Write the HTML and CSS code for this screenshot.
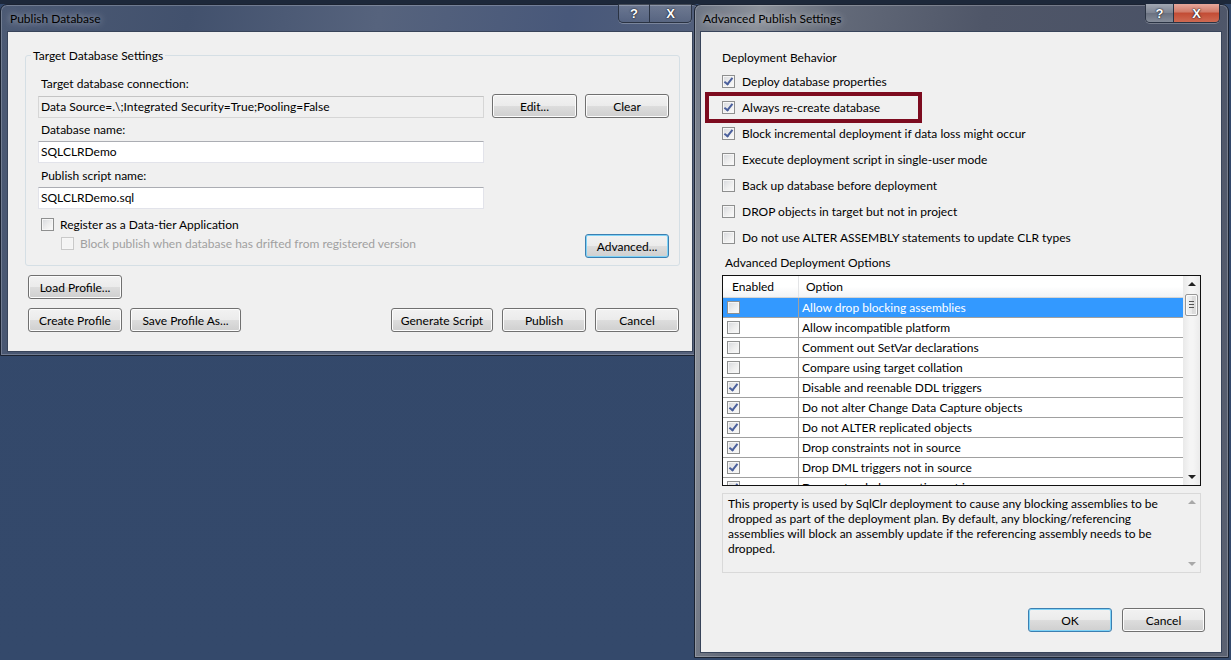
FILE: index.html
```html
<!DOCTYPE html>
<html>
<head>
<meta charset="utf-8">
<title>Publish Database</title>
<link rel="stylesheet" href="styles.css">
</head>
<body>
<div class="desktop">

  <section class="window win-publish">
    <header class="titlebar"><span class="title">Publish Database</span></header>
    <div class="caption-btns"><span class="cap help">?</span><span class="cap close">X</span></div>
    <div class="client pub-client">
      <div class="group">
        <span class="legend">Target Database Settings</span>
        <div class="lbl lbl-first">Target database connection:</div>
        <div class="conn-row">
          <div class="textbox readonly">Data Source=.\;Integrated Security=True;Pooling=False</div>
          <button class="btn w85">Edit...</button>
          <button class="btn w84">Clear</button>
        </div>
        <div class="lbl">Database name:</div>
        <div class="textbox">SQLCLRDemo</div>
        <div class="lbl lbl-gap">Publish script name:</div>
        <div class="textbox">SQLCLRDemo.sql</div>
        <label class="check-line reg"><span class="chk"></span>Register as a Data-tier Application</label>
        <div class="adv-row">
          <label class="check-line sub disabled"><span class="chk"></span>Block publish when database has drifted from registered version</label>
          <button class="btn default w84">Advanced...</button>
        </div>
      </div>
      <div class="load-line"><button class="btn w94">Load Profile...</button></div>
      <div class="action-line">
        <button class="btn w94">Create Profile</button>
        <button class="btn w111">Save Profile As...</button>
        <div class="spacer"></div>
        <button class="btn w102">Generate Script</button>
        <button class="btn w84">Publish</button>
        <button class="btn w84">Cancel</button>
      </div>
    </div>
  </section>

  <section class="window win-adv">
    <header class="titlebar"><span class="title">Advanced Publish Settings</span></header>
    <div class="caption-btns"><span class="cap help">?</span><span class="cap close">X</span></div>
    <div class="client adv-client">
      <div class="section-lbl">Deployment Behavior</div>
      <ul class="opt-list">
        <li class="opt"><span class="chk on"></span>Deploy database properties</li>
        <li class="opt"><span class="chk on"></span>Always re-create database<span class="mark"></span></li>
        <li class="opt"><span class="chk on"></span>Block incremental deployment if data loss might occur</li>
        <li class="opt"><span class="chk"></span>Execute deployment script in single-user mode</li>
        <li class="opt"><span class="chk"></span>Back up database before deployment</li>
        <li class="opt"><span class="chk"></span>DROP objects in target but not in project</li>
        <li class="opt"><span class="chk"></span>Do not use ALTER ASSEMBLY statements to update CLR types</li>
      </ul>
      <div class="section-lbl adv-lbl">Advanced Deployment Options</div>
      <div class="grid">
        <div class="grid-main">
          <div class="grid-head"><div class="gh c1">Enabled</div><div class="gh c2">Option</div></div>
          <div class="grid-row sel"><div class="gc c1"><span class="chk"></span></div><div class="gc c2">Allow drop blocking assemblies</div></div>
          <div class="grid-row"><div class="gc c1"><span class="chk"></span></div><div class="gc c2">Allow incompatible platform</div></div>
          <div class="grid-row"><div class="gc c1"><span class="chk"></span></div><div class="gc c2">Comment out SetVar declarations</div></div>
          <div class="grid-row"><div class="gc c1"><span class="chk"></span></div><div class="gc c2">Compare using target collation</div></div>
          <div class="grid-row"><div class="gc c1"><span class="chk on"></span></div><div class="gc c2">Disable and reenable DDL triggers</div></div>
          <div class="grid-row"><div class="gc c1"><span class="chk on"></span></div><div class="gc c2">Do not alter Change Data Capture objects</div></div>
          <div class="grid-row"><div class="gc c1"><span class="chk on"></span></div><div class="gc c2">Do not ALTER replicated objects</div></div>
          <div class="grid-row"><div class="gc c1"><span class="chk on"></span></div><div class="gc c2">Drop constraints not in source</div></div>
          <div class="grid-row"><div class="gc c1"><span class="chk on"></span></div><div class="gc c2">Drop DML triggers not in source</div></div>
          <div class="grid-row"><div class="gc c1"><span class="chk on"></span></div><div class="gc c2">Drop extended properties not in source</div></div>
        </div>
        <div class="vscroll">
          <span class="arr up"></span>
          <span class="thumb"></span>
          <span class="fill"></span>
          <span class="arr down"></span>
        </div>
      </div>
      <div class="desc">
        <p>This property is used by SqlClr deployment to cause any blocking assemblies to be<br>dropped as part of the deployment plan. By default, any blocking/referencing<br>assemblies will block an assembly update if the referencing assembly needs to be<br>dropped.</p>
        <div class="vscroll light">
          <span class="arr up"></span>
          <span class="fill"></span>
          <span class="arr down"></span>
        </div>
      </div>
      <div class="dlg-btns">
        <button class="btn default w84">OK</button>
        <button class="btn w83">Cancel</button>
      </div>
    </div>
  </section>

</div>
</body>
</html>
```

FILE: styles.css
```css
* { box-sizing: border-box; }
html, body { margin: 0; padding: 0; }
body {
  width: 1231px;
  height: 660px;
  overflow: hidden;
  background: #34496b;
  font-family: Lato, "Liberation Sans", sans-serif;
  font-size: 12px;
  color: #000;
}
.desktop {
  position: relative;
  width: 1231px;
  height: 660px;
  background: linear-gradient(#1d283a 0, #1d283a 4px, #33486a 4px, #34496b 100%);
}

/* ---------- window frames ---------- */
.window {
  position: absolute;
  display: flex;
  flex-direction: column;
  border: 1px solid #1b2332;
  border-radius: 7px 7px 0 0;
  box-shadow: inset 0 0 0 1px rgba(255,255,255,.22);
}
.win-publish {
  left: 0;
  top: 4px;
  width: 700px;
  height: 352px;
  padding: 0 7px 4px 7px;
  background: linear-gradient(100deg, #4c5a74 0%, #42516d 25%, #56637d 50%, #48587a 75%, #56627b 100%);
}
.win-adv {
  left: 694px;
  top: 4px;
  width: 535px;
  height: 654px;
  padding: 0 7px 5px 6px;
  z-index: 2;
  background: linear-gradient(100deg, #6c7483 0%, #8c919a 10%, #636a79 22%, #4f5668 45%, #4a5266 75%, #5b6272 100%);
}
.titlebar {
  height: 27px;
  flex: none;
  display: flex;
  align-items: center;
  padding-left: 2px;
}
.title {
  color: #000;
  text-shadow: 0 0 6px rgba(255,255,255,.55), 0 0 12px rgba(255,255,255,.35);
}
.caption-btns {
  position: absolute;
  top: -1px;
  height: 19px;
  display: flex;
  border: 1px solid #2a3343;
  border-top: 0;
  border-radius: 0 0 5px 5px;
  overflow: hidden;
  box-shadow: 0 1px 0 rgba(255,255,255,.25);
}
.win-publish .caption-btns { right: 7px; }
.win-adv .caption-btns { right: 8px; }
.cap {
  display: flex;
  align-items: center;
  justify-content: center;
  font-family: "Liberation Sans", sans-serif;
  font-weight: bold;
  font-size: 13px;
  color: #fff;
  text-shadow: 0 0 2px #1a2030, 0 0 1px #000;
  background: linear-gradient(rgba(255,255,255,.18), rgba(255,255,255,.05));
}
.cap + .cap { border-left: 1px solid #2a3343; }
.win-publish .help { width: 30px; }
.win-publish .close { width: 42px; }
.win-adv .help { width: 27px; background: linear-gradient(#a2a8b2, #7d8492 50%, #6a7180 51%, #858c99); }
.win-adv .close { width: 46px; background: linear-gradient(#e7a89b, #d07a68 45%, #c24b34 50%, #cf6a52 100%); }

.client {
  flex: 1;
  display: flex;
  flex-direction: column;
  background: #f0f0f0;
  box-shadow: 0 0 0 1px #38445a;
}

/* ---------- common controls ---------- */
.btn {
  height: 24px;
  padding: 0;
  font: inherit;
  color: #000;
  border: 1px solid #707070;
  border-radius: 3px;
  background: linear-gradient(#f2f2f2 0%, #ebebeb 50%, #dddddd 50%, #cfcfcf 100%);
  box-shadow: inset 0 0 0 1px #fcfcfc;
  flex: none;
}
.btn.default {
  border-color: #3c7fb1;
  box-shadow: inset 0 0 0 1px #7fd3f7;
}
.w83 { width: 83px; }
.w84 { width: 84px; }
.w85 { width: 85px; }
.w94 { width: 94px; }
.w102 { width: 102px; }
.w111 { width: 111px; }

.textbox {
  width: 446px;
  height: 22px;
  margin-top: 4px;
  padding: 0 2px;
  line-height: 20px;
  background: #fff;
  border: 1px solid #e2e3ea;
  border-top-color: #abadb3;
  white-space: nowrap;
}
.textbox.readonly {
  background: #f0f0f0;
  border-color: #d6d6d6;
  border-top-color: #c4c4c4;
}

.chk {
  position: relative;
  display: inline-block;
  flex: none;
  width: 13px;
  height: 13px;
  border: 1px solid #8e8f8f;
  background: linear-gradient(135deg, #d6d8dc 0%, #eeeeee 55%, #fbfbfb 100%);
  box-shadow: inset 0 0 0 1px #f6f6f6;
}
.chk.on::after {
  content: "";
  position: absolute;
  left: 3px;
  top: 0;
  width: 3px;
  height: 7px;
  border: solid #4a5f9c;
  border-width: 0 2px 2px 0;
  transform: rotate(38deg);
}
.disabled { color: #a0a0a0; }
.disabled .chk {
  border-color: #c9c9c9;
  background: #f4f4f4;
}

/* ---------- Publish Database ---------- */
.group {
  position: relative;
  margin: 23px 12px 0 17px;
  padding: 20px 10px 7px 12px;
  border: 1px solid #d5dfe5;
  border-radius: 3px;
}
.legend {
  position: absolute;
  top: -8px;
  left: 5px;
  padding: 0 2px;
  line-height: 15px;
  background: #f0f0f0;
}
.lbl {
  line-height: 15px;
  padding-left: 3px;
  margin-top: 4px;
}
.lbl-first { margin-top: 0; }
.lbl-gap { margin-top: 5px; }
.conn-row {
  display: flex;
  align-items: flex-end;
  gap: 8px;
  margin-top: 3px;
}
.conn-row .textbox { margin-top: 0; }
.check-line {
  display: flex;
  align-items: center;
  line-height: 15px;
}
.check-line .chk { margin-right: 6px; }
.reg { margin-top: 8px; padding-left: 3px; }
.adv-row {
  display: flex;
  justify-content: space-between;
  align-items: flex-start;
  margin-top: 2px;
}
.sub { margin-top: 2px; padding-left: 23px; }

.load-line { margin: 9px 0 0 20px; }
.action-line {
  display: flex;
  gap: 8px;
  margin: 9px 13px 0 20px;
}
.spacer { flex: 1; }
.action-line .w102 { margin-right: 1px; }
.action-line .w84 + .w84 { margin-left: 1px; }

/* ---------- Advanced Publish Settings ---------- */
.adv-client { padding: 18px 20px 0 21px; }
.section-lbl { line-height: 15px; }
.opt-list {
  list-style: none;
  margin: 3px 0 0;
  padding: 0;
}
.opt {
  position: relative;
  height: 26px;
  display: flex;
  align-items: center;
}
.opt .chk { margin-right: 7px; }
.mark {
  position: absolute;
  left: -17px;
  top: -2px;
  width: 217px;
  height: 31px;
  border: 4px solid #7d0b1f;
}
.adv-lbl { margin: 5px 0 0 3px; }

.grid {
  display: flex;
  width: 479px;
  height: 211px;
  margin-top: 5px;
  border: 1px solid #111;
  background: #fff;
}
.grid-main { flex: 1; overflow: hidden; }
.grid-head {
  display: flex;
  height: 22px;
  border-bottom: 1px solid #d5d5d5;
  background: linear-gradient(#ffffff, #ffffff 50%, #f2f3f5);
}
.gh { line-height: 21px; }
.gh.c1 { width: 76px; padding-left: 9px; border-right: 1px solid #e3e4e6; }
.gh.c2 { padding-left: 7px; }
.grid-row {
  display: flex;
  height: 20px;
  border-bottom: 1px solid #a0a0a0;
}
.grid-row.sel { background: #3399ff; color: #fff; }
.gc { line-height: 19px; }
.gc.c1 {
  width: 76px;
  padding-left: 4px;
  display: flex;
  align-items: center;
  border-right: 1px solid #a0a0a0;
}
.gc.c2 { flex: 1; padding-left: 3px; white-space: nowrap; }

.vscroll {
  width: 17px;
  flex: none;
  display: flex;
  flex-direction: column;
  align-items: center;
  background: linear-gradient(90deg, #e9e9e9, #f5f5f5 40%, #f5f5f5 60%, #ebebeb);
}
.vscroll.light { background: transparent; }
.arr {
  position: relative;
  width: 17px;
  height: 17px;
  flex: none;
}
.arr::after {
  content: "";
  position: absolute;
  left: 5px;
  top: 6px;
  border-left: 4px solid transparent;
  border-right: 4px solid transparent;
}
.arr.up::after { border-bottom: 4px solid #222; }
.arr.down::after { border-top: 4px solid #222; top: 7px; }
.vscroll.light .arr.up::after { border-bottom-color: #a8a8a8; }
.vscroll.light .arr.down::after { border-top-color: #a8a8a8; }
.thumb {
  position: relative;
  width: 13px;
  height: 22px;
  margin-top: 1px;
  flex: none;
  border: 1px solid #979797;
  border-radius: 2px;
  background: linear-gradient(90deg, #f4f4f4, #e9e9e9 50%, #dadada 51%, #e0e0e0);
  box-shadow: inset 0 0 0 1px #fbfbfb;
}
.thumb::after {
  content: "";
  position: absolute;
  left: 3px;
  top: 6px;
  width: 5px;
  height: 1px;
  background: #555;
  box-shadow: 0 3px 0 #555, 0 6px 0 #555;
}
.fill { flex: 1; }

.desc {
  display: flex;
  width: 479px;
  height: 80px;
  margin-top: 7px;
  border: 1px solid #d9d9d9;
  background: #f0f0f0;
}
.desc p {
  flex: 1;
  margin: 0;
  padding: 2px 0 0 5px;
  line-height: 15px;
  white-space: nowrap;
}

.dlg-btns {
  display: flex;
  justify-content: flex-end;
  gap: 10px;
  margin: 35px -4px 0 0;
}
```
